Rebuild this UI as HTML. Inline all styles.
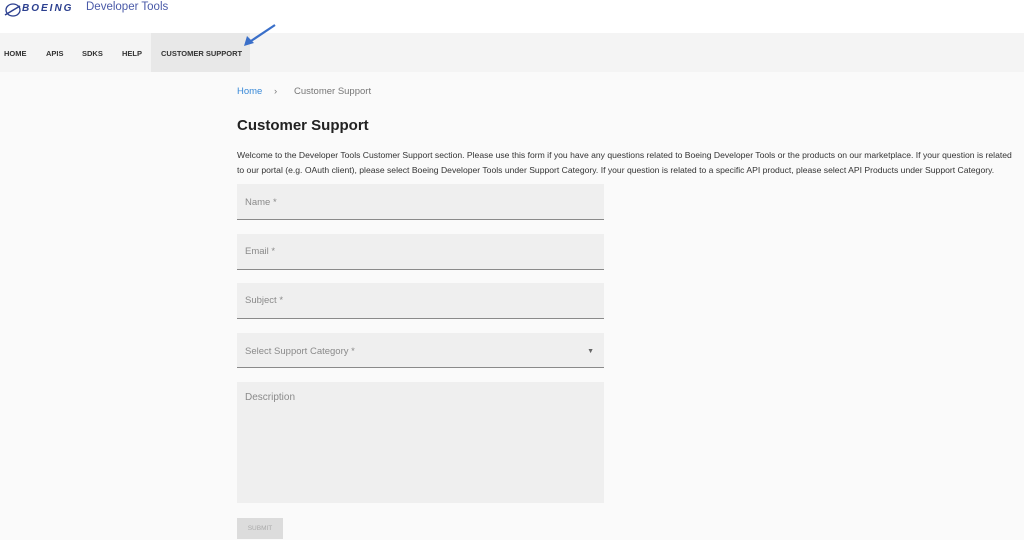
<!DOCTYPE html>
<html><head><style>
*{margin:0;padding:0;box-sizing:border-box}
body{width:1024px;height:553px;background:#fff;font-family:"Liberation Sans",Arial,sans-serif;position:relative;overflow:hidden}
.abs{position:absolute}
.nav{top:33px;left:0;width:1024px;height:39px;background:#f4f4f4}
.nav span{position:absolute;top:16px;font-size:7.5px;font-weight:bold;color:#333}
.main{top:72px;left:0;width:1024px;height:468px;background:#fafafa}
.f{position:absolute;left:237px;width:367px;background:#efefef;border-bottom:1px solid #8a8a8a;font-size:9.5px;color:#8a8a8a;padding-left:8px}
</style></head><body>
<svg class="abs" style="left:4px;top:2px" width="18" height="16" viewBox="0 0 18 16"><ellipse cx="9" cy="8" rx="7" ry="6" fill="none" stroke="#2b3f8f" stroke-width="1.3"/><path d="M1 13 L16 4" stroke="#2b3f8f" stroke-width="1.5"/></svg>
<div class="abs" style="left:22px;top:3px;font-size:10px;font-weight:bold;font-style:italic;color:#2b3f8f;letter-spacing:2px">BOEING</div>
<div class="abs" style="left:86px;top:1px;font-size:11.5px;color:#4a5aa8">Developer Tools</div>
<div class="abs nav">
<div class="abs" style="left:151px;top:0;width:99px;height:39px;background:#e8e8e8"></div>
<span style="left:4px">HOME</span><span style="left:46px">APIS</span><span style="left:82px">SDKS</span><span style="left:122px">HELP</span><span style="left:161px">CUSTOMER SUPPORT</span>
</div>
<svg class="abs" style="left:240px;top:22px" width="40" height="26" viewBox="0 0 40 26"><path d="M35 3 L8 21" stroke="#3a6fc9" stroke-width="2.2"/><path d="M4 24 L7 14 L14 21 Z" fill="#3a6fc9"/></svg>
<div class="abs main"></div>
<div class="abs" style="left:237px;top:86px;font-size:9.5px;color:#3a8ad8">Home</div>
<div class="abs" style="left:274px;top:86px;font-size:9.5px;color:#777">›</div>
<div class="abs" style="left:294px;top:86px;font-size:9.5px;color:#777">Customer Support</div>
<div class="abs" style="left:237px;top:117px;font-size:15px;font-weight:bold;color:#222">Customer Support</div>
<div class="abs" style="left:237px;top:148px;width:787px;font-size:8.6px;line-height:15px;color:#333;white-space:nowrap">Welcome to the Developer Tools Customer Support section. Please use this form if you have any questions related to Boeing Developer Tools or the products on our marketplace. If your question is related<br>to our portal (e.g. OAuth client), please select Boeing Developer Tools under Support Category. If your question is related to a specific API product, please select API Products under Support Category.</div>
<div class="f" style="top:184px;height:36px;line-height:38px">Name *</div>
<div class="f" style="top:234px;height:36px;line-height:36px">Email *</div>
<div class="f" style="top:283px;height:36px;line-height:36px">Subject *</div>
<div class="f" style="top:333px;height:35px;line-height:38px">Select Support Category *<span style="position:absolute;right:10px;top:0;font-size:7px;color:#666">▼</span></div>
<div class="f" style="top:382px;height:121px;border-bottom:none;padding-top:10px;font-size:10px">Description</div>
<div class="abs" style="left:237px;top:518px;width:46px;height:21px;background:#dcdcdc;font-size:6.5px;color:#aaa;text-align:center;line-height:21px">SUBMIT</div>
</body></html>
